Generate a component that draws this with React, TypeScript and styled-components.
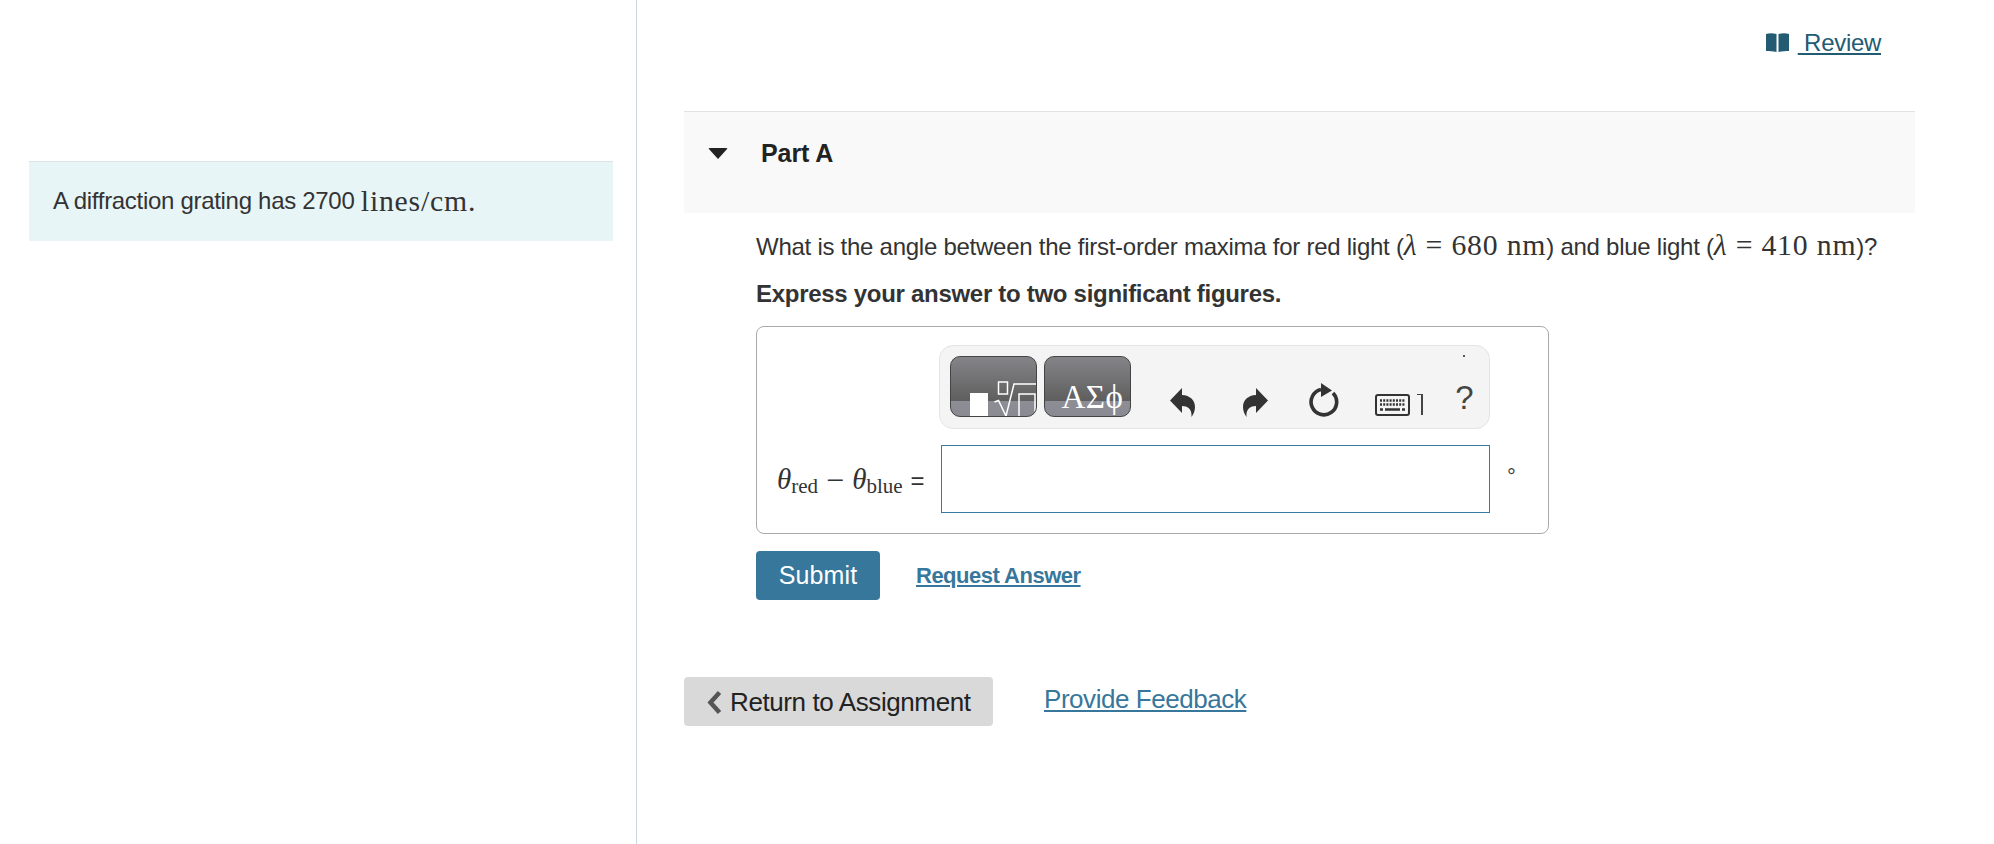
import React from 'react';
import styled, { createGlobalStyle } from 'styled-components';

const GlobalStyle = createGlobalStyle`
  html, body {
    margin: 0;
    padding: 0;
    background: #fff;
    font-family: "Liberation Sans", Arial, sans-serif;
    color: #333;
  }
`;

const Page = styled.div`
  display: flex;
  width: 1994px;
  height: 844px;
  overflow: hidden;
`;

const Sidebar = styled.aside`
  box-sizing: border-box;
  width: 637px;
  height: 100%;
  padding: 161px 23px 0 29px;
  border-right: 1px solid #c7d6e0;
`;

const Intro = styled.div`
  box-sizing: border-box;
  height: 80px;
  padding: 0 24px 2px;
  display: flex;
  align-items: center;
  background: #e8f5f7;
  border-top: 1px solid #dde3e6;
  font-size: 24px;
  letter-spacing: -0.3px;
  white-space: pre;
`;

const Math = styled.span`
  font-family: "Liberation Serif", "Times New Roman", serif;
  font-size: 1.24em;
  letter-spacing: 0.8px;
`;

const Main = styled.main`
  flex: 1;
  min-width: 0;
  padding: 0 79px 0 47px;
`;

const ReviewRow = styled.div`
  display: flex;
  justify-content: flex-end;
  height: 111px;
  padding: 28px 34px 0 0;
  box-sizing: border-box;
`;

const ReviewLink = styled.a`
  display: flex;
  align-items: flex-start;
  height: 26px;
  color: #235b73;
  font-size: 24px;
  line-height: 29px;
  letter-spacing: -0.3px;
  white-space: pre;

  span {
    text-decoration: underline;
    text-underline-offset: 2px;
  }

  svg {
    margin: 5px 9px 0 0;
  }
`;

const PartHeader = styled.div`
  box-sizing: border-box;
  height: 102px;
  display: flex;
  align-items: center;
  padding: 0 0 18px 24px;
  background: #f9f9f9;
  border-top: 1px solid #e2e2e2;
`;

const Caret = styled.span`
  width: 0;
  height: 0;
  border-left: 10px solid transparent;
  border-right: 10px solid transparent;
  border-top: 11px solid #222;
  border-radius: 2px;
`;

const PartTitle = styled.h2`
  margin: 0 0 0 33px;
  font-size: 25px;
  font-weight: 700;
  color: #222;
  letter-spacing: -0.1px;
`;

const PartBody = styled.div`
  padding: 0 0 0 72px;
`;

const Question = styled.p`
  margin: 0;
  padding-top: 17px;
  height: 30px;
  line-height: 30px;
  font-size: 24px;
  white-space: nowrap;
  letter-spacing: -0.26px;
`;

const Instruction = styled.p`
  margin: 0;
  padding-top: 19px;
  height: 30px;
  line-height: 30px;
  font-size: 24px;
  font-weight: 700;
  letter-spacing: -0.29px;
`;

const AnswerCard = styled.div`
  box-sizing: border-box;
  width: 793px;
  height: 208px;
  margin-top: 17px;
  padding: 18px 0 0 20px;
  border: 1px solid #aaa;
  border-radius: 8px;
`;

const ToolbarRow = styled.div`
  display: flex;
  justify-content: flex-end;
  padding-right: 58px;
`;

const Toolbar = styled.div`
  box-sizing: border-box;
  position: relative;
  width: 551px;
  height: 84px;
  padding: 10px 0 0 10px;
  display: flex;
  background: #f4f4f4;
  border: 1px solid #e4e4e4;
  border-radius: 14px;
`;

const Palette = styled.button`
  box-sizing: border-box;
  width: 87px;
  height: 61px;
  padding: 0;
  margin-right: 7px;
  flex: none;
  display: flex;
  align-items: flex-end;
  justify-content: center;
  overflow: hidden;
  border: 1px solid #444;
  border-radius: 10px;
  color: #fff;
  background: linear-gradient(to bottom, #858589 0%, #5e5e5e 75%, #8d8d95 75%, #8a8a92 100%);
`;

const Greek = styled.span`
  font-family: "Liberation Serif", "Times New Roman", serif;
  font-size: 33px;
  line-height: 38px;
  letter-spacing: 0.5px;
  margin-left: 10px;
`;

const Tool = styled.span`
  width: ${(props: { $w: number }) => props.$w}px;
  flex: none;
  height: 61px;
  display: flex;
  align-items: flex-end;
  justify-content: center;
  color: #333;
`;

const HelpMark = styled.span`
  font-size: 33px;
  line-height: 38px;
  color: #444;
`;

const Speck = styled.i`
  position: absolute;
  top: 9px;
  right: 24px;
  width: 2px;
  height: 2px;
  background: #555;
`;

const KeyboardWrap = styled.span`
  display: flex;
  align-items: flex-end;
  margin-bottom: 1px;
`;

const Bracket = styled.span`
  width: 6px;
  height: 21px;
  margin: 0 0 1px 7px;
  border: solid #444;
  border-width: 1px 2px 0 0;
  box-sizing: border-box;
  flex: none;
`;

const AnswerRow = styled.div`
  display: flex;
  align-items: center;
  margin-top: 16px;
`;

const Formula = styled.div`
  width: 164px;
  padding-top: 1px;
  font-family: "Liberation Serif", "Times New Roman", serif;
  font-size: 27px;
  color: #333;
  white-space: nowrap;

  i {
    font-size: 29px;
  }

  sub {
    font-size: 21px;
    line-height: 0;
    vertical-align: -4px;
  }

  b {
    font-weight: 400;
    font-size: 32px;
    line-height: 0;
    margin: 0 8px;
    vertical-align: -2px;
  }

  em {
    font: 400 24px "Liberation Sans", Arial, sans-serif;
    margin-left: 8px;
  }
`;

const AnswerInput = styled.input`
  box-sizing: border-box;
  width: 549px;
  height: 68px;
  border: 1px solid #38799c;
  background: #fff;
  outline: none;
`;

const Degree = styled.span`
  margin: 0 0 5px 17px;
  font-size: 22px;
  line-height: 22px;
  color: #444;
`;

const Actions = styled.div`
  display: flex;
  align-items: center;
  margin-top: 17px;
  gap: 36px;
`;

const SubmitButton = styled.button`
  width: 124px;
  height: 49px;
  padding: 0;
  border: 0;
  border-radius: 4px;
  background: #37779b;
  color: #fff;
  font: 400 25px "Liberation Sans", Arial, sans-serif;
  letter-spacing: 0.1px;
`;

const RequestLink = styled.a`
  color: #37779b;
  font-size: 22px;
  font-weight: 700;
  text-decoration: underline;
  letter-spacing: -0.5px;
`;

const Footer = styled.div`
  display: flex;
  align-items: center;
  margin-top: 77px;
  gap: 51px;
`;

const ReturnButton = styled.button`
  box-sizing: border-box;
  width: 309px;
  height: 49px;
  padding: 2px 0 0 23px;
  display: flex;
  align-items: center;
  gap: 8px;
  border: 0;
  border-radius: 4px;
  background: #d9d9d9;
  color: #222;
  font: 400 26px "Liberation Sans", Arial, sans-serif;
  letter-spacing: -0.4px;

  svg {
    flex: none;
  }
`;

const FeedbackLink = styled.a`
  margin-bottom: 4px;
  color: #37779b;
  font-size: 26px;
  text-decoration: underline;
  letter-spacing: -0.45px;
`;

const BookIcon = () => (
  <svg width="23" height="19" viewBox="0 0 23 19" fill="#235b73">
    <path d="M0 1c3-1 7-1 10.500 0v18C7 18 3 18 0 18z" />
    <path d="M23 1c-3-1-7-1-10.500 0v18c3.500-1 7.500-1 10.500-1z" />
  </svg>
);

const TemplateIcon = () => (
  <svg width="85" height="59" viewBox="0 0 85 59" fill="none" stroke="#fff" strokeWidth="1.5">
    <rect x="19" y="36" width="18" height="23" fill="#fff" stroke="none" />
    <rect x="47.500" y="25" width="9" height="12" />
    <path d="M43.500 45l4-1.500L55 59l8-32h22" />
    <path d="M68 59V37h16v22" />
  </svg>
);

const UndoIcon = () => (
  <svg width="25" height="29" viewBox="0 0 25 29" fill="#333">
    <path d="M12 0v7c8 .5 13 5 13 12 0 4-1.500 7-3.500 10 .5-7-2.500-11-9.500-11v7L0 12.500z" />
  </svg>
);

const RedoIcon = () => (
  <svg width="25" height="29" viewBox="0 0 25 29" fill="#333">
    <path d="M13 0v7C5 7.500 0 12 0 19c0 4 1.500 7 3.500 10-.5-7 2.500-11 9.500-11v7l12-12.500z" />
  </svg>
);

const RefreshIcon = () => (
  <svg width="31" height="34" viewBox="0 0 31 34">
    <path d="M13 6.500A12.800 12.800 0 1 0 25 10" fill="none" stroke="#333" strokeWidth="3.600" />
    <path d="M13 0l11 7.500L13 14z" fill="#333" />
  </svg>
);

const KeyboardIcon = () => (
  <svg width="35" height="22" viewBox="0 0 35 22" fill="none">
    <rect x="1" y="1" width="33" height="20" rx="2" stroke="#333" strokeWidth="2" />
    <path d="M5 6.500h25M5 10.500h25" stroke="#333" strokeWidth="2.400" strokeDasharray="2 1.200" />
    <path d="M5 15.500h3M10 15.500h15M27 15.500h3" stroke="#333" strokeWidth="2.400" />
  </svg>
);

const ChevronIcon = () => (
  <svg width="15" height="25" viewBox="0 0 15 25" fill="none">
    <path d="M12.500 2.500L3.500 12.500l9 10" stroke="#555" strokeWidth="4.500" />
  </svg>
);

const App = () => (
  <Page>
    <GlobalStyle />
    <Sidebar>
      <Intro>
        A diffraction grating has 2700 <Math>lines/cm.</Math>
      </Intro>
    </Sidebar>
    <Main>
      <ReviewRow>
        <ReviewLink>
          <BookIcon />
          <span> Review</span>
        </ReviewLink>
      </ReviewRow>
      <PartHeader>
        <Caret />
        <PartTitle>Part A</PartTitle>
      </PartHeader>
      <PartBody>
        <Question>
          What is the angle between the first-order maxima for red light (
          <Math><i>λ</i> = 680 nm</Math>) and blue light (<Math><i>λ</i> = 410 nm</Math>)?
        </Question>
        <Instruction>Express your answer to two significant figures.</Instruction>
        <AnswerCard>
          <ToolbarRow>
            <Toolbar>
              <Palette><TemplateIcon /></Palette>
              <Palette><Greek>ΑΣϕ</Greek></Palette>
              <Tool $w={89}><UndoIcon /></Tool>
              <Tool $w={57}><RedoIcon /></Tool>
              <Tool $w={78}><RefreshIcon /></Tool>
              <Tool $w={74}>
                <KeyboardWrap>
                  <KeyboardIcon />
                  <Bracket />
                </KeyboardWrap>
              </Tool>
              <Tool $w={57}><HelpMark>?</HelpMark></Tool>
              <Speck />
            </Toolbar>
          </ToolbarRow>
          <AnswerRow>
            <Formula>
              <i>θ</i><sub>red</sub><b>−</b><i>θ</i><sub>blue</sub><em>=</em>
            </Formula>
            <AnswerInput aria-label="answer" />
            <Degree>°</Degree>
          </AnswerRow>
        </AnswerCard>
        <Actions>
          <SubmitButton>Submit</SubmitButton>
          <RequestLink>Request Answer</RequestLink>
        </Actions>
      </PartBody>
      <Footer>
        <ReturnButton>
          <ChevronIcon />
          Return to Assignment
        </ReturnButton>
        <FeedbackLink>Provide Feedback</FeedbackLink>
      </Footer>
    </Main>
  </Page>
);

export default App;
